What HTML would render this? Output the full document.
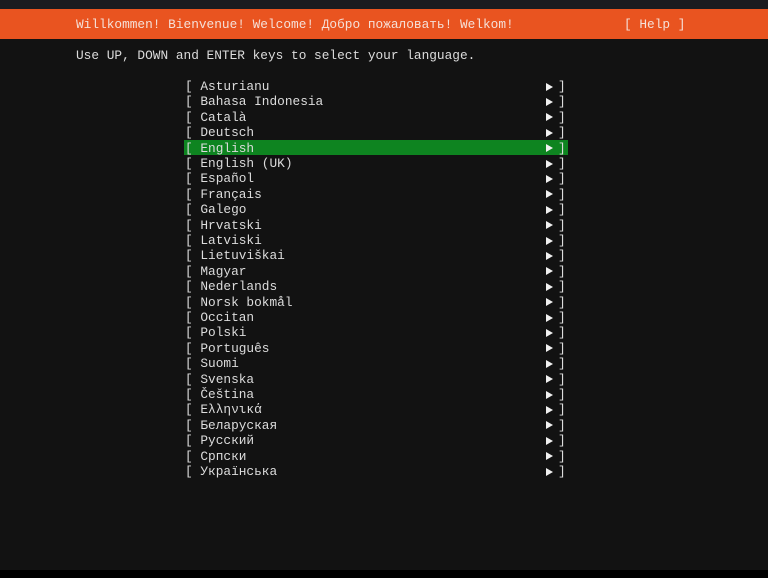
<!DOCTYPE html>
<html><head><meta charset="utf-8"><style>
body{margin:0;width:768px;height:578px;background:#121212;overflow:hidden;position:relative;font-family:"Liberation Mono","DejaVu Sans Mono",monospace;font-size:12.8px;color:#dcdcdc}
.top{position:absolute;left:0;top:0;width:768px;height:9px;background:#1b1b1f}
.hdr{position:absolute;left:0;top:9px;width:768px;height:30px;background:#e95420}
.bot{position:absolute;left:0;top:570px;width:768px;height:8px;background:#000}
.t{position:absolute;white-space:pre;line-height:15px}
.a{position:absolute;width:0;height:0;border-top:4px solid transparent;border-bottom:4px solid transparent;border-left:7px solid #f0f0f0}
.sel{position:absolute;left:184px;top:140px;width:384px;height:15px;background:#0e8420}
</style></head><body>
<div class="top"></div><div class="hdr"></div><div class="bot"></div>
<div class="t" style="left:76px;top:17px;color:#f5e0d8">Willkommen! Bienvenue! Welcome! Добро пожаловать! Welkom!</div>
<div class="t" style="left:624px;top:17px;color:#f5e0d8">[ Help ]</div>
<div class="t" style="left:76px;top:48px">Use UP, DOWN and ENTER keys to select your language.</div>
<div class="sel"></div>
<div id="rows"></div>
<script>
var L=["Asturianu","Bahasa Indonesia","Català","Deutsch","English","English (UK)","Español","Français","Galego","Hrvatski","Latviski","Lietuviškai","Magyar","Nederlands","Norsk bokmål","Occitan","Polski","Português","Suomi","Svenska","Čeština","Ελληνικά","Беларуская","Русский","Српски","Українська"];
var h="";
L.forEach(function(n,i){var y=79+i*15.4;
h+='<div class="t" style="left:185px;top:'+y+'px">[ '+n+'</div>';
h+='<div class="a" style="left:546px;top:'+(y+3.5)+'px"></div>';
h+='<div class="t" style="left:558px;top:'+y+'px">]</div>';});
document.getElementById("rows").innerHTML=h;
</script>
</body></html>
